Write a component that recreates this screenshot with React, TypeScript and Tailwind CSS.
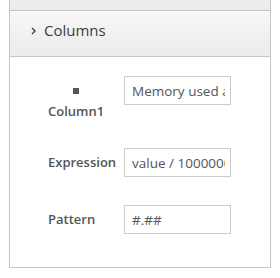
import React from "react";

const font = { fontFamily: '"Open Sans", "Noto Sans", sans-serif' };

function Field({ value }: { value: string }) {
  return (
    <input
      readOnly
      value={value}
      className="w-[107px] h-[29px] border border-[#cccccc] bg-white pl-[7px] pr-[5px] text-[13.5px] text-[#555555] outline-none"
      style={font}
    />
  );
}

export default function App() {
  return (
    <div className="w-[280px] h-[278px] bg-white" style={font}>
      <div className="ml-[9px] w-[262px] border-x border-b border-[#c6c6c6]">
        <div className="h-[11px] bg-[#ededed] border-b border-[#c6c6c6]" />
        <div className="h-[46px] flex items-center bg-gradient-to-b from-[#f7f7f7] to-[#ebebeb] border-b border-[#c6c6c6] pl-[21px] pb-[7px]">
          <svg width="5" height="8" viewBox="0 0 5 8" className="mr-[8px] mt-[1px]">
            <polyline points="1,1 4,4 1,7" fill="none" stroke="#444" strokeWidth="1.4" />
          </svg>
          <span className="text-[15px] text-[#3d3d3d] leading-none">Columns</span>
        </div>
        <div className="pt-[19px] pb-[33px] pl-[38px] flex flex-col">
          <div className="flex items-start">
            <div className="w-[76px]">
              <div className="inline-flex flex-col items-center pt-[11px]">
                <div className="w-[6px] h-[6px] bg-[#555555]" />
                <div className="mt-[8px] text-[13px] leading-[18px] font-semibold text-[#555555]">Column1</div>
              </div>
            </div>
            <Field value="Memory used as percentage" />
          </div>
          <div className="flex items-center mt-[28px]">
            <div className="w-[76px] text-[13px] font-semibold text-[#555555]">Expression</div>
            <Field value="value / 1000000" />
          </div>
          <div className="flex items-center mt-[28px]">
            <div className="w-[76px] text-[13px] font-semibold text-[#555555]">Pattern</div>
            <Field value="#.##" />
          </div>
        </div>
      </div>
    </div>
  );
}
